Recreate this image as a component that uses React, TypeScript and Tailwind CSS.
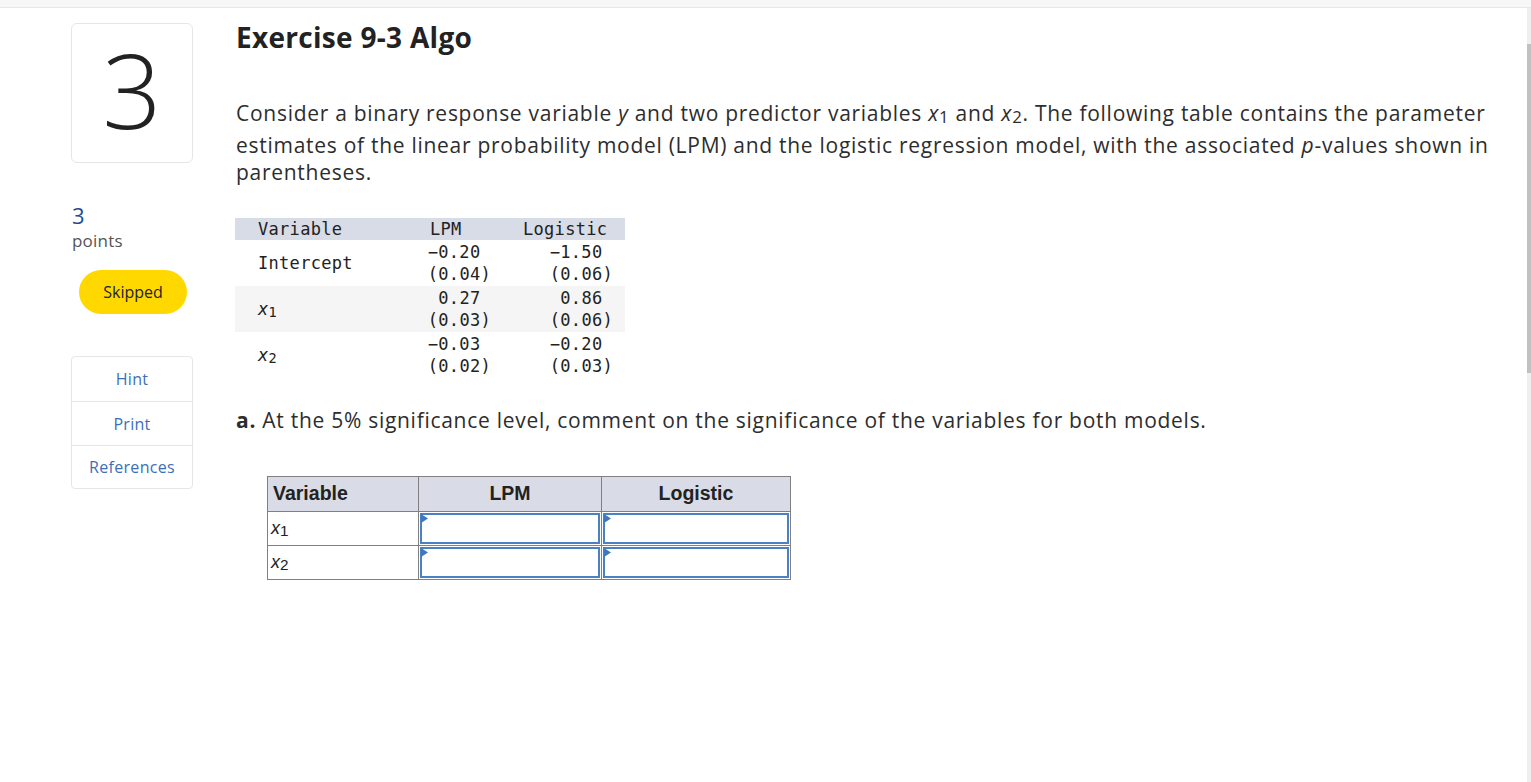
import React from 'react';

const body = "font-['Open_Sans',sans-serif]";
const mono = "font-['DejaVu_Sans_Mono',monospace]";

const X = ({ n }: { n: string }) => (
    <span className="whitespace-nowrap">
        <i>x</i>
        <sub className="text-[0.8em] relative top-[2px]">{n}</sub>
    </span>
);

const estimates = [
    { label: 'Intercept', lpm: ['−0.20', '(0.04)'], logit: ['−1.50', '(0.06)'], stripe: false },
    { label: 'x1', lpm: ['0.27', '(0.03)'], logit: ['0.86', '(0.06)'], stripe: true },
    { label: 'x2', lpm: ['−0.03', '(0.02)'], logit: ['−0.20', '(0.03)'], stripe: false },
];

const Cell: React.FC<{ lines: string[]; pr: string }> = ({ lines, pr }) => (
    <div className={`flex flex-col items-end ${pr}`}>
        <span>{lines[0]}{'\u00a0'}</span>
        <span>{lines[1]}</span>
    </div>
);

const AnswerInput = () => (
    <div className="relative h-[31px] m-[1px] border-2 border-[#4a80c4] bg-white">
        <svg className="absolute -left-[1px] -top-[1px]" width="8" height="10" viewBox="0 0 8 10">
            <path d="M0 0 L7 4.5 L0 9 Z" fill="#3f78c0" />
        </svg>
    </div>
);

export default function App() {
    return (
        <div className={`w-[1531px] h-[782px] bg-white flex flex-col text-[#2d2d2d] ${body}`}>
            <div className="h-[8px] bg-[#f7f7f7] border-b border-[#e8e8e8]" />
            <div className="flex flex-1">
                <div className="flex flex-1">
                    {/* left rail */}
                    <div className="ml-[71px] w-[122px] flex flex-col">
                        <div className="mt-[15px] h-[140px] rounded-[6px] border border-[#e6e6e6] flex items-center justify-center">
                            <span className="text-[104px] leading-none font-light text-[#222] -mt-[8px]">3</span>
                        </div>
                        <div className="mt-[39px] pl-[1px] text-[22px] leading-[27px] text-[#1f4f8f]">3</div>
                        <div className="pl-[1px] text-[17px] leading-[24px] text-[#555] tracking-[0.2px]">points</div>
                        <div className="mt-[17px] ml-[8px] w-[108px] h-[44px] rounded-full bg-[#ffd800] flex items-center justify-center text-[16px] text-[#222]">
                            Skipped
                        </div>
                        <div className="mt-[42px] rounded-[4px] border border-[#e6e6e6] flex flex-col text-[16px] tracking-[0.3px] text-[#3c6fb8]">
                            <div className="h-[45px] flex items-center justify-center border-b border-[#e6e6e6]">Hint</div>
                            <div className="h-[44px] flex items-center justify-center border-b border-[#e6e6e6]">Print</div>
                            <div className="h-[42px] flex items-center justify-center">References</div>
                        </div>
                    </div>

                    {/* question */}
                    <div className="ml-[43px] w-[1280px] flex flex-col">
                        <h1 className="mt-[12px] text-[28px] leading-[34px] font-bold tracking-[0.3px] text-[#222]">Exercise 9-3 Algo</h1>
                        <div className="mt-[46px] text-[21px] tracking-[0.72px] whitespace-nowrap">
                            <div className="h-[32px] leading-[27px]">
                                Consider a binary response variable <i>y</i> and two predictor variables <X n="1" /> and <X n="2" />. The following table contains the parameter
                            </div>
                            <div className="h-[27px] leading-[27px]">
                                estimates of the linear probability model (LPM) and the logistic regression model, with the associated <i>p</i>-values shown in
                            </div>
                            <div className="h-[27px] leading-[27px]">parentheses.</div>
                        </div>

                        <div className={`mt-[32px] w-[390px] -ml-[1px] text-[17px] tracking-[0.3px] text-[#222] ${mono}`}>
                            <div className="grid grid-cols-[174px_100px_116px] h-[22px] leading-[22px] bg-[#d8dce6]">
                                <span className="pl-[23px]">Variable</span>
                                <span className="pl-[21px]">LPM</span>
                                <span className="pl-[14px]">Logistic</span>
                            </div>
                            {estimates.map((r) => (
                                <div
                                    key={r.label}
                                    className={`grid grid-cols-[174px_100px_116px] items-center leading-[22px] py-[1px] ${r.stripe ? 'bg-[#f5f5f5]' : ''}`}
                                >
                                    <span className="pl-[23px]">
                                        {r.label === 'Intercept' ? 'Intercept' : <X n={r.label.slice(1)} />}
                                    </span>
                                    <Cell lines={r.lpm} pr="pr-[18px]" />
                                    <Cell lines={r.logit} pr="pr-[12px]" />
                                </div>
                            ))}
                        </div>

                        <p className="mt-[29px] text-[21px] leading-[27px] tracking-[0.72px] whitespace-nowrap">
                            <b>a.</b> At the 5% significance level, comment on the significance of the variables for both models.
                        </p>

                        <table className="mt-[42px] ml-[31px] w-[524px] border-collapse text-[#222] font-['Liberation_Sans',Arial,sans-serif]">
                            <thead>
                                <tr className="h-[35px] bg-[#d9dce6] text-[19.5px] font-bold">
                                    <th className="w-[151px] border border-[#808080] text-left pl-[5px] font-bold">Variable</th>
                                    <th className="w-[183px] border border-[#808080] font-bold">LPM</th>
                                    <th className="border border-[#808080] font-bold">Logistic</th>
                                </tr>
                            </thead>
                            <tbody>
                                {['1', '2'].map((n) => (
                                    <tr key={n} className="text-[18px]">
                                        <td className="border border-[#808080] pl-[3px] align-middle">
                                            <i>x</i>
                                            <sub className="text-[0.85em] relative top-[2px]">{n}</sub>
                                        </td>
                                        <td className="border border-[#808080] p-0">
                                            <AnswerInput />
                                        </td>
                                        <td className="border border-[#808080] p-0">
                                            <AnswerInput />
                                        </td>
                                    </tr>
                                ))}
                            </tbody>
                        </table>
                    </div>
                </div>
                {/* thin scrollbar */}
                <div className="w-[4px] bg-[#efefef] pt-[36px]">
                    <div className="h-[329px] bg-[#c1c1c1]" />
                </div>
            </div>
        </div>
    );
}
